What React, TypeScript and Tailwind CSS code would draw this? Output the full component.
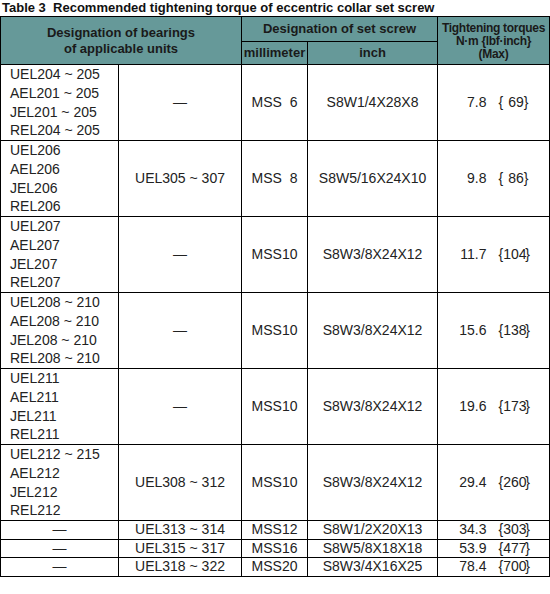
import React from "react";

type Row = {
  units: string[];
  second: string;
  mm: string;
  inch: string;
  nm: string;
  lbf: string;
};

const rows: Row[] = [
  { units: ["UEL204 ~ 205", "AEL201 ~ 205", "JEL201 ~ 205", "REL204 ~ 205"], second: "—", mm: "MSS\u20076", inch: "S8W1/4X28X8", nm: "7.8", lbf: "69" },
  { units: ["UEL206", "AEL206", "JEL206", "REL206"], second: "UEL305 ~ 307", mm: "MSS\u20078", inch: "S8W5/16X24X10", nm: "9.8", lbf: "86" },
  { units: ["UEL207", "AEL207", "JEL207", "REL207"], second: "—", mm: "MSS10", inch: "S8W3/8X24X12", nm: "11.7", lbf: "104" },
  { units: ["UEL208 ~ 210", "AEL208 ~ 210", "JEL208 ~ 210", "REL208 ~ 210"], second: "—", mm: "MSS10", inch: "S8W3/8X24X12", nm: "15.6", lbf: "138" },
  { units: ["UEL211", "AEL211", "JEL211", "REL211"], second: "—", mm: "MSS10", inch: "S8W3/8X24X12", nm: "19.6", lbf: "173" },
  { units: ["UEL212 ~ 215", "AEL212", "JEL212", "REL212"], second: "UEL308 ~ 312", mm: "MSS10", inch: "S8W3/8X24X12", nm: "29.4", lbf: "260" },
  { units: [], second: "UEL313 ~ 314", mm: "MSS12", inch: "S8W1/2X20X13", nm: "34.3", lbf: "303" },
  { units: [], second: "UEL315 ~ 317", mm: "MSS16", inch: "S8W5/8X18X18", nm: "53.9", lbf: "477" },
  { units: [], second: "UEL318 ~ 322", mm: "MSS20", inch: "S8W3/4X16X25", nm: "78.4", lbf: "700" },
];

function Torque({ nm, lbf }: { nm: string; lbf: string }) {
  return (
    <div className="flex justify-center">
      <span className="w-[28px] text-right">{nm}</span>
      <span className="ml-[12px] flex w-[30px]">
        <span>{"{"}</span>
        <span className="w-[22px] text-right">{lbf}</span>
        <span>{"}"}</span>
      </span>
    </div>
  );
}

export default function App() {
  const cell = "border border-black p-0 align-middle";
  return (
    <div className="w-[550px] h-[594px] bg-white text-[#222]" style={{ fontFamily: '"Liberation Sans", Arial, sans-serif' }}>
      <div className="h-[16px] pl-[2px] text-[13px] font-bold leading-[15px] text-[#111]">
        Table 3&nbsp;&nbsp;Recommended tightening torque of eccentric collar set screw
      </div>
      <table className="table-fixed border-collapse w-[549px] text-[14px]">
        <colgroup>
          <col className="w-[118px]" />
          <col className="w-[123px]" />
          <col className="w-[66px]" />
          <col className="w-[130px]" />
          <col className="w-[112px]" />
        </colgroup>
        <thead>
          <tr className="h-[25px] bg-[#669999] text-[#1a1a1a] font-bold text-[13px]">
            <th colSpan={2} rowSpan={2} className={`${cell} leading-[16px]`}>
              Designation of bearings
              <br />
              of applicable units
            </th>
            <th colSpan={2} className={`${cell} leading-[16px]`}>
              Designation of set screw
            </th>
            <th rowSpan={2} className={`${cell} text-[12px] leading-[13px] tracking-[-0.3px] pt-[1px]`}>
              Tightening torques
              <br />
              N·m {"{lbf·inch}"}
              <br />
              (Max)
            </th>
          </tr>
          <tr className="h-[23px] bg-[#669999] text-[#1a1a1a] font-bold text-[13px]">
            <th className={`${cell} leading-[16px]`}>millimeter</th>
            <th className={`${cell} leading-[16px]`}>inch</th>
          </tr>
        </thead>
        <tbody>
          {rows.map((r, i) => {
            const tall = r.units.length > 0;
            return (
              <tr key={i} className={tall ? "h-[76px] leading-[18.75px]" : "h-[18px] leading-[17.5px]"}>
                <td className={`${cell} ${tall ? "pl-[9px] text-left" : "text-center"}`}>
                  {tall ? r.units.map((u) => <div key={u}>{u}</div>) : "—"}
                </td>
                <td className={`${cell} text-center`}>{r.second}</td>
                <td className={`${cell} text-center whitespace-pre`}>{r.mm}</td>
                <td className={`${cell} text-center`}>{r.inch}</td>
                <td className={cell}>
                  <Torque nm={r.nm} lbf={r.lbf} />
                </td>
              </tr>
            );
          })}
        </tbody>
      </table>
    </div>
  );
}
